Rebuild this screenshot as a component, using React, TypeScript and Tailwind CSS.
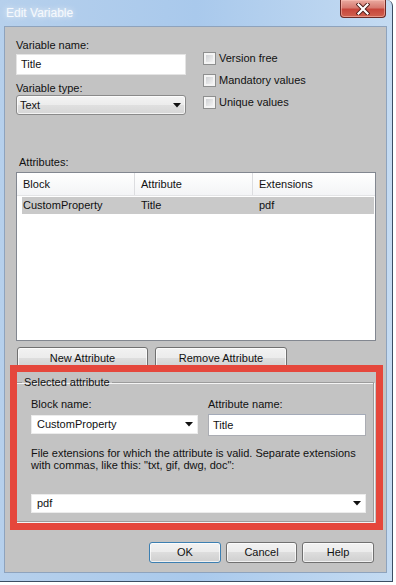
import React from "react";

const Arrow = () => (
  <svg width="8" height="5" viewBox="0 0 8 5" className="shrink-0">
    <path d="M0 0H8L4 4.6Z" fill="#111" />
  </svg>
);

const Checkbox = ({ label }: { label: string }) => (
  <div className="flex items-center gap-[3px] h-[13px]">
    <div className="w-[13px] h-[13px] border border-[#8e8f8f] bg-[#f4f4f4] p-[2px] shrink-0">
      <div className="w-full h-full bg-linear-to-br from-[#cfd1d4] to-[#f2f2f2]" />
    </div>
    <span className="leading-[13px]">{label}</span>
  </div>
);

const Btn = ({ children, cls }: { children: React.ReactNode; cls: string }) => (
  <div
    className={
      "flex items-center justify-center rounded-[3px] border bg-[linear-gradient(to_bottom,#f2f2f2_0%,#ebebeb_50%,#dddddd_50%,#cfcfcf_100%)] shadow-[inset_0_0_0_1px_rgba(255,255,255,0.7)] " +
      cls
    }
  >
    {children}
  </div>
);

export default function App() {
  return (
    <div className="relative w-[396px] h-[585px] bg-white font-['Liberation_Sans',Arial,sans-serif] text-[11px] leading-[13px] text-[#111]">
      <div className="flex flex-col w-[393px] h-[582px] border-r border-b border-[#3b4d63] rounded-tr-[6px] bg-linear-to-r from-[#b6d0ec] via-[#a9c9ec] to-[#c4dbf2]">
        {/* Title bar */}
        <div className="h-[26px] shrink-0 flex justify-between">
          <div className="pl-[6px] pt-[6px] text-[12px] leading-[14px] text-[#f6f9fd] [text-shadow:0_0_6px_rgba(255,255,255,0.95),0_0_2px_rgba(200,220,240,0.9)]">
            Edit Variable
          </div>
          <div className="mr-[6px] w-[46px] h-[18px] rounded-b-[4px] border border-t-0 border-[#6b2a26] bg-[linear-gradient(to_bottom,#e9aaa0_0%,#d77a70_45%,#c7463b_55%,#d0624f_100%)] shadow-[inset_0_0_0_1px_rgba(255,200,190,0.5)] flex items-center justify-center">
            <svg width="14" height="12" viewBox="0 0 14 12">
              <path d="M2.5 1.5L11.5 10.5M11.5 1.5L2.5 10.5" stroke="#4a1a16" strokeWidth="4" strokeLinecap="square" />
              <path d="M2.5 1.5L11.5 10.5M11.5 1.5L2.5 10.5" stroke="#ffffff" strokeWidth="2.2" strokeLinecap="square" />
            </svg>
          </div>
        </div>

        {/* Client */}
        <div className="ml-[4px] w-[383px] flex-1 mb-[8px] bg-[#c3c3c3] border border-[#8ea3bd] flex flex-col">
          {/* Top section */}
          <div className="flex pt-[12px] pl-[11px]">
            <div className="w-[170px] flex flex-col">
              <div className="h-[13px]">Variable name:</div>
              <div className="mt-[2px] h-[21px] bg-white border border-[#e4e4e4] pl-[4px] flex items-center">Title</div>
              <div className="mt-[7px] h-[13px]">Variable type:</div>
              <div className="h-[20px] rounded-[3px] border border-[#8a8a8a] bg-[linear-gradient(to_bottom,#f4f4f4_0%,#ececec_50%,#e0e0e0_50%,#d6d6d6_100%)] shadow-[inset_0_0_0_1px_rgba(255,255,255,0.7)] pl-[3px] pr-[4px] flex items-center justify-between">
                <span>Text</span>
                <Arrow />
              </div>
            </div>
            <div className="ml-[17px] pt-[13px] flex flex-col gap-[9px]">
              <Checkbox label="Version free" />
              <Checkbox label="Mandatory values" />
              <Checkbox label="Unique values" />
            </div>
          </div>

          <div className="mt-[41px] pl-[14px] h-[13px]">Attributes:</div>

          {/* List */}
          <div className="mt-[3px] ml-[11px] w-[360px] h-[169px] border border-[#828790] bg-white flex flex-col">
            <div className="h-[23px] flex bg-linear-to-b from-white to-[#f3f4f6] border-b border-[#e3e4e6]">
              <div className="w-[118px] border-r border-[#dcdde0] pl-[6px] flex items-center">Block</div>
              <div className="w-[118px] border-r border-[#dcdde0] pl-[6px] flex items-center">Attribute</div>
              <div className="flex-1 pl-[6px] flex items-center">Extensions</div>
            </div>
            <div className="mt-[1px] ml-[5px] mr-[1px] h-[17px] bg-[#c9c9c9] flex items-center">
              <div className="w-[119px] pl-[1px]">CustomProperty</div>
              <div className="w-[118px]">Title</div>
              <div className="flex-1">pdf</div>
            </div>
          </div>

          {/* Buttons */}
          <div className="mt-[6px] ml-[12px] flex gap-[7px]">
            <Btn cls="w-[131px] h-[23px] border-[#707070]">New Attribute</Btn>
            <Btn cls="w-[132px] h-[23px] border-[#707070]">Remove Attribute</Btn>
          </div>

          {/* Group box */}
          <fieldset className="mt-[6px] ml-[9px] w-[360px] border border-[#9c9c9c] shadow-[inset_1px_1px_0_#f4f4f4,1px_1px_0_#f4f4f4] pb-[8px]">
            <legend className="ml-[7px] px-[2px] leading-[13px]">Selected attribute</legend>
            <div className="pl-[16px] pt-[9px] flex flex-col">
              <div className="flex gap-[10px]">
                <div className="w-[167px] flex flex-col">
                  <div className="h-[13px]">Block name:</div>
                  <div className="mt-[4px] h-[19px] bg-white border border-[#ececec] pl-[5px] pr-[4px] flex items-center justify-between">
                    <span>CustomProperty</span>
                    <Arrow />
                  </div>
                </div>
                <div className="w-[158px] flex flex-col">
                  <div className="h-[13px]">Attribute name:</div>
                  <div className="mt-[3px] h-[22px] bg-white border border-[#abadb3] border-t-[#a3aab8] pl-[4px] flex items-center">Title</div>
                </div>
              </div>
              <div className="mt-[11px] leading-[12px]">
                File extensions for which the attribute is valid. Separate extensions
                <br />
                with commas, like this: "txt, gif, dwg, doc":
              </div>
              <div className="mt-[23px] w-[335px] h-[19px] bg-white border border-[#ececec] pl-[5px] pr-[4px] flex items-center justify-between">
                <span>pdf</span>
                <Arrow />
              </div>
            </div>
          </fieldset>

          {/* Bottom buttons */}
          <div className="mt-[20px] pr-[12px] flex justify-end gap-[5px]">
            <Btn cls="w-[72px] h-[21px] border-[#3c7fb1] shadow-[inset_0_0_0_1px_rgba(180,225,250,0.9)]">OK</Btn>
            <Btn cls="w-[71px] h-[21px] border-[#707070]">Cancel</Btn>
            <Btn cls="w-[72px] h-[21px] border-[#707070]">Help</Btn>
          </div>
        </div>
      </div>

      {/* Red annotation frame */}
      <div className="absolute left-[10px] top-[365px] w-[373px] h-[165px] border-[7px] border-[#e5473c] pointer-events-none" />
    </div>
  );
}
